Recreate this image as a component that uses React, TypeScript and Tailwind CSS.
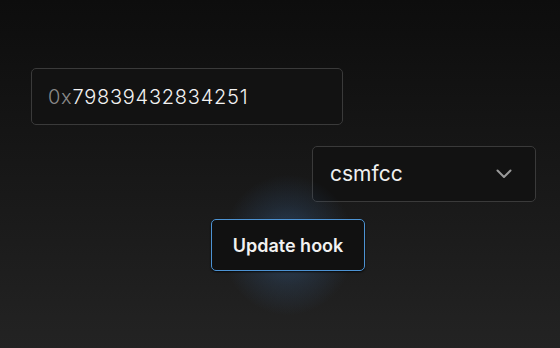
import React from "react";

export default function App() {
  return (
    <div
      className="w-full h-[348px] overflow-hidden flex flex-col items-start bg-gradient-to-b from-[#0d0d0d] to-[#232323]"
      style={{ fontFamily: "Inter, 'Noto Sans', sans-serif" }}
    >
      <div className="mt-[68px] ml-[31px] w-[312px] h-[57px] rounded-[5px] border border-[#3a3a3a] bg-[#121212] flex items-center pl-[16px] text-[20px] font-light tracking-[0.75px]">
        <span className="text-[#8a8a8a]">0x</span>
        <span className="text-[#f2f2f2]">79839432834251</span>
      </div>
      <div className="mt-[21px] ml-[312px] w-[224px] h-[56px] rounded-[5px] border border-[#3a3a3a] bg-[#121212] flex items-center justify-between pl-[17px] pr-[23px]">
        <span className="text-[21px] text-[#f0f0f0]">csmfcc</span>
        <svg width="16" height="10" viewBox="0 0 16 10" fill="none">
          <path d="M1.5 1.5 L8 8 L14.5 1.5" stroke="#9a9a9a" strokeWidth="2" strokeLinecap="round" strokeLinejoin="round" />
        </svg>
      </div>
      <div className="relative mt-[17px] ml-[211px] w-[154px] h-[52px]">
        <div className="absolute left-[10px] right-[10px] top-[-45px] bottom-[-45px] rounded-full bg-[radial-gradient(ellipse_at_center,rgba(70,130,200,0.4)_0%,rgba(70,130,200,0.14)_40%,rgba(70,130,200,0)_70%)]" />
        <div className="relative w-full h-full rounded-[5px] border-[1.5px] border-[#4d93d3] bg-[#111111] flex items-center justify-center text-[18px] font-semibold text-[#f2f2f2] shadow-[0_1px_2px_rgba(0,0,0,0.8)]">
          Update hook
        </div>
      </div>
    </div>
  );
}
